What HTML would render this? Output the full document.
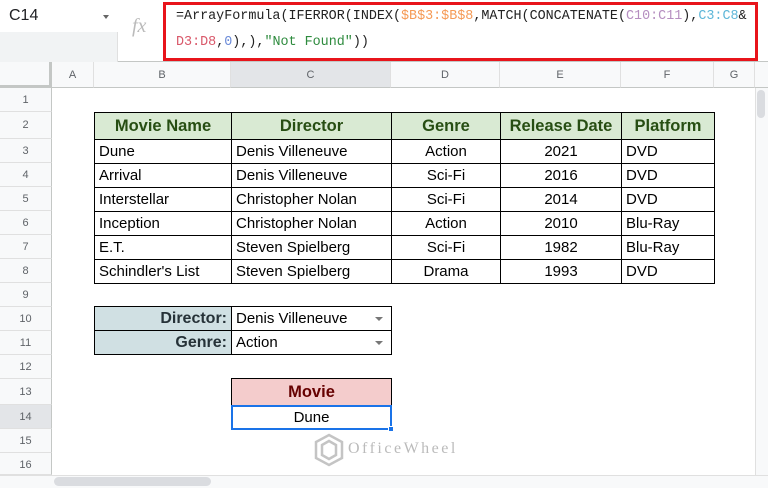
<!DOCTYPE html>
<html><head><style>
body{margin:0;width:768px;height:488px;overflow:hidden;background:#fff;font-family:"Liberation Sans",Arial,sans-serif;position:relative}
div{box-sizing:border-box}
.a{position:absolute}
.rh{position:absolute;left:0;width:52px;background:#f8f9fa;border-bottom:1px solid #e0e0e0;border-right:1px solid #c4c7c5;color:#5f6368;font-size:11px;text-align:center}
.ch{position:absolute;top:62px;height:26px;background:#f8f9fa;border-right:1px solid #e0e0e0;border-bottom:1px solid #c4c7c5;color:#5f6368;font-size:11px;text-align:center;line-height:26px}
.c{position:absolute;font-size:15px;color:#000;padding:0 4px;white-space:nowrap;overflow:hidden;border-right:1px solid #000;border-bottom:1px solid #000}
.h{font-size:16.5px;font-weight:bold;text-align:center}
.mono{font-family:"Liberation Mono",monospace;font-size:13.4px}
</style></head><body>
<div class="a" style="left:0;top:0;width:768px;height:62px;background:#fff;border-bottom:1px solid #c4c7c5"></div>
<div class="a" style="left:0;top:0;width:118px;height:62px;background:#f1f3f4;border-right:1px solid #e0e0e0"></div>
<div class="a" style="left:0;top:0;width:118px;height:32px;background:#fff;"></div>
<div class="a" style="left:9px;top:7px;font-size:16px;color:#202124">C14</div>
<div class="a" style="left:103px;top:15px;width:0;height:0;border-left:3px solid transparent;border-right:3px solid transparent;border-top:4px solid #666"></div>
<div class="a" style="left:132px;top:15px;font-family:'Liberation Serif',serif;font-style:italic;font-size:20px;color:#bbb">fx</div>
<div class="a" style="left:163px;top:2px;width:595px;height:59px;border:3px solid #e8141b"></div>
<div class="a mono" style="left:176px;top:9px;color:#222">=ArrayFormula(IFERROR(INDEX(<span style="color:#f59a56">$B$3:$B$8</span>,MATCH(CONCATENATE(<span style="color:#b58ec0">C10:C11</span>),<span style="color:#5db6d8">C3:C8</span>&amp;</div>
<div class="a mono" style="left:176px;top:35px;color:#222"><span style="color:#d9586a">D3:D8</span>,<span style="color:#6a8ad8">0</span>),),<span style="color:#2e8b3e">"Not Found"</span>))</div>

<div class="ch" style="left:0;width:52px;border-right:3px solid #c4c7c5;border-bottom:3px solid #c4c7c5"></div>
<div class="ch" style="left:52px;width:42px">A</div>
<div class="ch" style="left:94px;width:137px">B</div>
<div class="ch" style="left:231px;width:160px;background:#e3e5e8">C</div>
<div class="ch" style="left:391px;width:109px">D</div>
<div class="ch" style="left:500px;width:121px">E</div>
<div class="ch" style="left:621px;width:93px">F</div>
<div class="ch" style="left:714px;width:41px">G</div>
<div class="ch" style="left:755px;width:13px;border-right:none"></div>
<div class="a" style="left:755px;top:88px;width:13px;height:387px;background:#f8f9fa;border-left:1px solid #e0e0e0"></div>
<div class="a" style="left:757px;top:90px;width:8px;height:28px;background:#dadce0;border-radius:4px"></div>

<div class="rh" style="top:88px;height:24px;line-height:24px">1</div>
<div class="rh" style="top:112px;height:27px;line-height:27px">2</div>
<div class="rh" style="top:139px;height:24px;line-height:24px">3</div>
<div class="rh" style="top:163px;height:24px;line-height:24px">4</div>
<div class="rh" style="top:187px;height:24px;line-height:24px">5</div>
<div class="rh" style="top:211px;height:24px;line-height:24px">6</div>
<div class="rh" style="top:235px;height:24px;line-height:24px">7</div>
<div class="rh" style="top:259px;height:24px;line-height:24px">8</div>
<div class="rh" style="top:283px;height:24px;line-height:24px">9</div>
<div class="rh" style="top:307px;height:24px;line-height:24px">10</div>
<div class="rh" style="top:331px;height:24px;line-height:24px">11</div>
<div class="rh" style="top:355px;height:24px;line-height:24px">12</div>
<div class="rh" style="top:379px;height:26px;line-height:26px">13</div>
<div class="rh" style="top:405px;height:24px;line-height:24px;background:#e3e5e8">14</div>
<div class="rh" style="top:429px;height:24px;line-height:24px">15</div>
<div class="rh" style="top:453px;height:22px;line-height:24px">16</div>

<div class="a" style="left:0;top:475px;width:768px;height:13px;background:#f8f9fa;border-top:1px solid #e0e0e0"></div>
<div class="a" style="left:54px;top:477px;width:157px;height:9px;background:#dadce0;border-radius:5px"></div>

<div class="a" style="left:94px;top:112px;width:621px;height:172px;border-left:1px solid #000;border-top:1px solid #000"></div>
<div class="c h" style="left:95px;top:113px;width:137px;height:27px;line-height:26px;background:#d9ead3;color:#274e13">Movie Name</div>
<div class="c h" style="left:232px;top:113px;width:160px;height:27px;line-height:26px;background:#d9ead3;color:#274e13">Director</div>
<div class="c h" style="left:392px;top:113px;width:109px;height:27px;line-height:26px;background:#d9ead3;color:#274e13">Genre</div>
<div class="c h" style="left:501px;top:113px;width:121px;height:27px;line-height:26px;background:#d9ead3;color:#274e13">Release Date</div>
<div class="c h" style="left:622px;top:113px;width:93px;height:27px;line-height:26px;background:#d9ead3;color:#274e13">Platform</div>

<div class="c" style="left:95px;top:140px;width:137px;height:24px;line-height:23px">Dune</div>
<div class="c" style="left:232px;top:140px;width:160px;height:24px;line-height:23px">Denis Villeneuve</div>
<div class="c" style="left:392px;top:140px;width:109px;height:24px;line-height:23px;text-align:center">Action</div>
<div class="c" style="left:501px;top:140px;width:121px;height:24px;line-height:23px;text-align:center">2021</div>
<div class="c" style="left:622px;top:140px;width:93px;height:24px;line-height:23px">DVD</div>

<div class="c" style="left:95px;top:164px;width:137px;height:24px;line-height:23px">Arrival</div>
<div class="c" style="left:232px;top:164px;width:160px;height:24px;line-height:23px">Denis Villeneuve</div>
<div class="c" style="left:392px;top:164px;width:109px;height:24px;line-height:23px;text-align:center">Sci-Fi</div>
<div class="c" style="left:501px;top:164px;width:121px;height:24px;line-height:23px;text-align:center">2016</div>
<div class="c" style="left:622px;top:164px;width:93px;height:24px;line-height:23px">DVD</div>

<div class="c" style="left:95px;top:188px;width:137px;height:24px;line-height:23px">Interstellar</div>
<div class="c" style="left:232px;top:188px;width:160px;height:24px;line-height:23px">Christopher Nolan</div>
<div class="c" style="left:392px;top:188px;width:109px;height:24px;line-height:23px;text-align:center">Sci-Fi</div>
<div class="c" style="left:501px;top:188px;width:121px;height:24px;line-height:23px;text-align:center">2014</div>
<div class="c" style="left:622px;top:188px;width:93px;height:24px;line-height:23px">DVD</div>

<div class="c" style="left:95px;top:212px;width:137px;height:24px;line-height:23px">Inception</div>
<div class="c" style="left:232px;top:212px;width:160px;height:24px;line-height:23px">Christopher Nolan</div>
<div class="c" style="left:392px;top:212px;width:109px;height:24px;line-height:23px;text-align:center">Action</div>
<div class="c" style="left:501px;top:212px;width:121px;height:24px;line-height:23px;text-align:center">2010</div>
<div class="c" style="left:622px;top:212px;width:93px;height:24px;line-height:23px">Blu-Ray</div>

<div class="c" style="left:95px;top:236px;width:137px;height:24px;line-height:23px">E.T.</div>
<div class="c" style="left:232px;top:236px;width:160px;height:24px;line-height:23px">Steven Spielberg</div>
<div class="c" style="left:392px;top:236px;width:109px;height:24px;line-height:23px;text-align:center">Sci-Fi</div>
<div class="c" style="left:501px;top:236px;width:121px;height:24px;line-height:23px;text-align:center">1982</div>
<div class="c" style="left:622px;top:236px;width:93px;height:24px;line-height:23px">Blu-Ray</div>

<div class="c" style="left:95px;top:260px;width:137px;height:24px;line-height:23px">Schindler's List</div>
<div class="c" style="left:232px;top:260px;width:160px;height:24px;line-height:23px">Steven Spielberg</div>
<div class="c" style="left:392px;top:260px;width:109px;height:24px;line-height:23px;text-align:center">Drama</div>
<div class="c" style="left:501px;top:260px;width:121px;height:24px;line-height:23px;text-align:center">1993</div>
<div class="c" style="left:622px;top:260px;width:93px;height:24px;line-height:23px">DVD</div>

<div class="a" style="left:94px;top:306px;width:298px;height:49px;border-left:1px solid #000;border-top:1px solid #000"></div>
<div class="c" style="left:95px;top:307px;width:137px;height:24px;line-height:23px;background:#d0e0e3;color:#263238;font-weight:bold;text-align:right;font-size:16px">Director:</div>
<div class="c" style="left:232px;top:307px;width:160px;height:24px;line-height:23px">Denis Villeneuve</div>
<div class="c" style="left:95px;top:331px;width:137px;height:24px;line-height:23px;background:#d0e0e3;color:#263238;font-weight:bold;text-align:right;font-size:16px">Genre:</div>
<div class="c" style="left:232px;top:331px;width:160px;height:24px;line-height:23px">Action</div>
<div class="a" style="left:375px;top:317px;border-left:4px solid transparent;border-right:4px solid transparent;border-top:4px solid #777"></div>
<div class="a" style="left:375px;top:341px;border-left:4px solid transparent;border-right:4px solid transparent;border-top:4px solid #777"></div>

<div class="a" style="left:231px;top:378px;width:161px;height:28px;border-left:1px solid #000;border-top:1px solid #000"></div>
<div class="c h" style="left:232px;top:379px;width:160px;height:27px;line-height:26px;background:#f4cccc;color:#660000">Movie</div>
<div class="a" style="left:231px;top:405px;width:161px;height:25px;border:2px solid #1a73e8;font-size:15px;text-align:center;line-height:21px">Dune</div>
<div class="a" style="left:388px;top:426px;width:6px;height:6px;background:#1a73e8;border:1px solid #fff"></div>

<svg class="a" style="left:313px;top:433px" width="32" height="34" viewBox="0 0 32 34"><g fill="none" stroke="#c4c4c4" stroke-width="2.5"><path d="M16 2 L29 9 V25 L16 32 L3 25 V9 Z"/><path d="M16 8 L23 12 V22 L16 26 L9 22 V12 Z"/></g></svg>
<div class="a" style="left:348px;top:440px;font-family:'Liberation Serif',serif;font-size:16px;letter-spacing:2.5px;color:#bbb">OfficeWheel</div>
</body></html>
